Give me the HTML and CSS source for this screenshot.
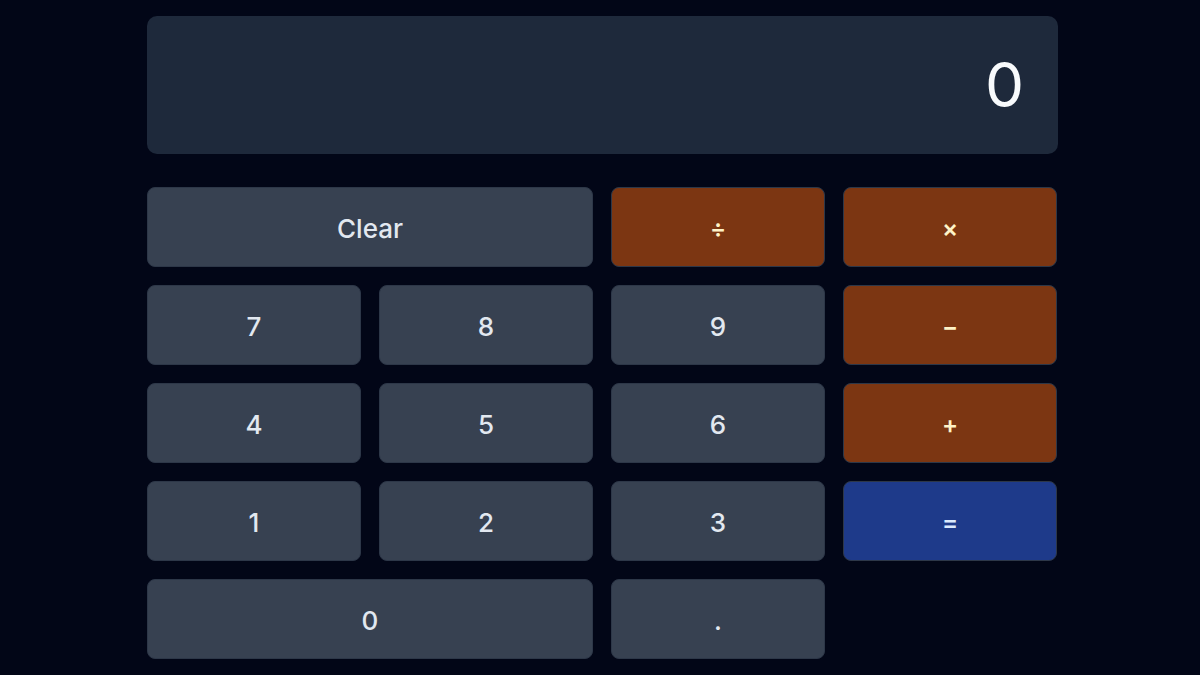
FILE: index.html
```html
<!DOCTYPE html>
<html lang="en">
<head>
    <meta charset="UTF-8">
    <meta name="viewport" content="width=device-width, initial-scale=1.0">
    <title>Calculator</title>
    <link rel="stylesheet" href="styles.css">
</head>
<body>
    <div class="calculator">
        <!-- display -->
        <div class="display" id="display">0</div>

        <!-- keys -->
        <div class="keys">
            <button class="key wide">Clear</button>
            <button class="key op">÷</button>
            <button class="key op">×</button>

            <button class="key">7</button>
            <button class="key">8</button>
            <button class="key">9</button>
            <button class="key op">−</button>

            <button class="key">4</button>
            <button class="key">5</button>
            <button class="key">6</button>
            <button class="key op">+</button>

            <button class="key">1</button>
            <button class="key">2</button>
            <button class="key">3</button>
            <button class="key equals">=</button>

            <button class="key wide">0</button>
            <button class="key">.</button>
        </div>
    </div>
</body>
</html>
```

FILE: styles.css
```css
body {
    margin: 0;
    padding: 16px 142px 0 147px;
    background: #020617;
    font-family: Inter, "Noto Sans", sans-serif;
}

.calculator {
    width: 911px;
}

/* display */
.display {
    height: 138px;
    box-sizing: border-box;
    padding: 0 34px;
    background: #1e293b;
    border-radius: 10px;
    color: #f8fafc;
    font-size: 62px;
    line-height: 138px;
    text-align: right;
    margin-bottom: 33px;
}

/* keys */
.keys {
    display: grid;
    grid-template-columns: repeat(4, 214px);
    grid-auto-rows: 80px;
    gap: 18px;
}

.key {
    background: #374151;
    border: 1px solid #2d3748;
    border-radius: 8px;
    color: #e2e8f0;
    font-family: inherit;
    font-size: 26px;
    font-weight: 500;
    cursor: pointer;
    padding: 3px 0 0;
}

.key.wide {
    grid-column: span 2;
}

.key.op {
    background: #7c3612;
    color: #fef3c7;
    font-size: 24px;
    font-weight: 600;
}

.key.equals {
    background: #1e3a8a;
    color: #dbeafe;
    font-size: 24px;
    font-weight: 600;
}
```
